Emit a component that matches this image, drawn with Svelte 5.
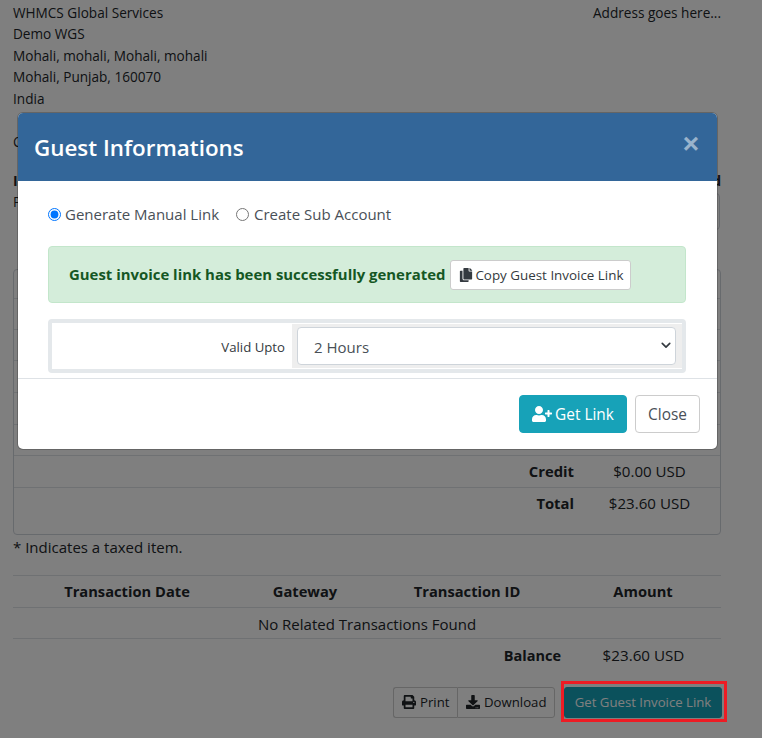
<script>
  const address = ['WHMCS Global Services', 'Demo WGS', 'Mohali, mohali, Mohali, mohali', 'Mohali, Punjab, 160070', 'India'];
  const hiddenRows = [31, 31, 32, 32, 31];
</script>

<div class="page">
  <div class="top">
    <div>
      {#each address as line}<div>{line}</div>{/each}
    </div>
    <div>Address goes here...</div>
  </div>
  <div class="client">Client</div>
  <div class="meta">
    <div>
      <div class="bold">Invoiced To</div>
      <div>Paid</div>
    </div>
    <div class="pay">
      <div class="bold">Payment Method</div>
      <div class="paybox"></div>
    </div>
  </div>

  <div class="panel">
    <div class="panel-head"></div>
    {#each hiddenRows as h}<div class="prow" style="height: {h}px"></div>{/each}
    <div class="prow sum"><b>Credit</b><span>$0.00 USD</span></div>
    <div class="prow sum"><b>Total</b><span>$23.60 USD</span></div>
  </div>
  <div class="note">* Indicates a taxed item.</div>

  <div class="tx">
    <div class="txrow head"><div>Transaction Date</div><div>Gateway</div><div>Transaction ID</div><div>Amount</div></div>
    <div class="txrow empty">No Related Transactions Found</div>
    <div class="balance"><b>Balance</b><span>$23.60 USD</span></div>
  </div>

  <div class="actions">
    <div class="group">
      <button class="gbtn">
        <svg viewBox="0 0 512 512" class="ic"><path d="M448 192V77.25c0-8.49-3.37-16.62-9.37-22.63L393.37 9.37c-6-6-14.14-9.37-22.63-9.37H96C78.33 0 64 14.33 64 32v160c-35.35 0-64 28.65-64 64v112c0 8.84 7.16 16 16 16h48v96c0 17.67 14.33 32 32 32h320c17.67 0 32-14.33 32-32v-96h48c8.84 0 16-7.16 16-16V256c0-35.35-28.65-64-64-64zm-64 256H128v-96h256v96zm0-224H128V64h192v48c0 8.84 7.16 16 16 16h48v96zm48 72c-13.25 0-24-10.75-24-24 0-13.26 10.75-24 24-24s24 10.74 24 24c0 13.25-10.75 24-24 24z"/></svg>
        Print
      </button>
      <button class="gbtn">
        <svg viewBox="0 0 512 512" class="ic"><path d="M216 0h80c13.3 0 24 10.7 24 24v168h87.7c17.8 0 26.7 21.5 14.1 34.1L269.7 378.3c-7.5 7.5-19.8 7.5-27.3 0L90.1 226.1c-12.6-12.6-3.7-34.1 14.1-34.1H192V24c0-13.3 10.7-24 24-24zm296 376v112c0 13.3-10.7 24-24 24H24c-13.3 0-24-10.7-24-24V376c0-13.3 10.7-24 24-24h146.7l49 49c20.1 20.1 52.5 20.1 72.6 0l49-49H488c13.3 0 24 10.7 24 24zm-124 88c0-11-9-20-20-20s-20 9-20 20 9 20 20 20 20-9 20-20zm64 0c0-11-9-20-20-20s-20 9-20 20 9 20 20 20 20-9 20-20z"/></svg>
        Download
      </button>
    </div>
    <button class="guest">Get Guest Invoice Link</button>
  </div>
</div>

<div class="backdrop"></div>
<div class="annot"></div>

<div class="modal">
  <div class="mhead">
    <div class="mtitle">Guest Informations</div>
    <span class="x">×</span>
  </div>
  <div class="mbody">
    <div class="radios">
      <label><input type="radio" name="m" checked /> Generate Manual Link</label>
      <label><input type="radio" name="m" /> Create Sub Account</label>
    </div>
    <div class="alert">
      <b>Guest invoice link has been successfully generated</b>
      <button class="copy">
        <svg viewBox="0 0 448 512" class="ic"><path d="M320 448v40c0 13.255-10.745 24-24 24H24c-13.255 0-24-10.745-24-24V120c0-13.255 10.745-24 24-24h72v296c0 30.879 25.121 56 56 56h168zm0-344V0H152c-13.255 0-24 10.745-24 24v368c0 13.255 10.745 24 24 24h272c13.255 0 24-10.745 24-24V128H344c-13.2 0-24-10.8-24-24zm120.971-31.029L375.029 7.029A24 24 0 0 0 358.059 0H352v96h96v-6.059a24 24 0 0 0-7.029-16.97z"/></svg>
        Copy Guest Invoice Link
      </button>
    </div>
    <div class="valid">
      <div class="vlabel">Valid Upto</div>
      <div class="vcell">
        <div class="selectwrap">
          <select><option>2 Hours</option></select>
          <svg class="chev" viewBox="0 0 12 8"><path d="M1.5 1.5 6 6l4.5-4.5" fill="none" stroke="#343a40" stroke-width="2" stroke-linecap="round" stroke-linejoin="round"/></svg>
        </div>
      </div>
    </div>
  </div>
  <div class="mfoot">
    <button class="getlink">
      <svg viewBox="0 0 640 512" class="ic big"><path d="M624 208h-64v-64c0-8.8-7.2-16-16-16h-32c-8.8 0-16 7.2-16 16v64h-64c-8.8 0-16 7.2-16 16v32c0 8.8 7.2 16 16 16h64v64c0 8.8 7.2 16 16 16h32c8.8 0 16-7.2 16-16v-64h64c8.8 0 16-7.2 16-16v-32c0-8.8-7.2-16-16-16zm-400 48c70.7 0 128-57.3 128-128S294.7 0 224 0 96 57.3 96 128s57.3 128 128 128zm89.6 32h-16.7c-22.2 10.2-46.9 16-72.9 16s-50.6-5.8-72.9-16h-16.7C60.2 288 0 348.2 0 422.4V464c0 26.5 21.5 48 48 48h352c26.5 0 48-21.5 48-48v-41.6c0-74.2-60.2-134.4-134.4-134.4z"/></svg>
      Get Link
    </button>
    <button class="close">Close</button>
  </div>
</div>

<style>
  :global(body) {
    margin: 0;
    background: #fff;
    overflow: hidden;
  }
  :global(#app) {
    position: relative;
    width: 762px;
    height: 738px;
    overflow: hidden;
    font-family: "Open Sans", "Noto Sans", sans-serif;
    font-size: 13.6px;
    line-height: 21.6px;
    color: #212529;
  }
  button {
    font-family: inherit;
    cursor: pointer;
  }
  .page {
    box-sizing: border-box;
    width: 721px;
    padding: 1.6px 0 0 13px;
  }
  .top {
    display: flex;
    justify-content: space-between;
  }
  .client {
    margin-top: 21px;
    line-height: 21px;
  }
  .meta {
    display: flex;
    justify-content: space-between;
    margin-top: 18px;
  }
  .bold {
    font-weight: 700;
    font-size: 14px;
  }
  .pay {
    text-align: right;
  }
  .paybox {
    width: 200px;
    height: 37px;
    margin-left: auto;
    margin-right: 1px;
    margin-top: 1.4px;
    border: 1px solid #ced4da;
    border-radius: 4px;
    box-sizing: border-box;
  }
  .panel {
    margin-top: 39.4px;
    height: 266px;
    box-sizing: border-box;
    border: 1px solid #ced4da;
    border-radius: 4px;
    font-size: 15.1px;
  }
  .panel-head {
    height: 28px;
  }
  .prow {
    box-sizing: border-box;
    border-top: 1px solid #dee2e6;
  }
  .sum {
    display: grid;
    grid-template-columns: 560px 1fr;
    height: 32px;
    padding-top: 1px;
    align-items: center;
  }
  .sum b {
    text-align: right;
    font-size: 14.8px;
  }
  .sum span {
    text-align: center;
    padding-left: 5px;
  }
  .note {
    margin-top: 2px;
    font-size: 15px;
  }
  .tx {
    margin-top: 16.4px;
  }
  .txrow {
    box-sizing: border-box;
    height: 32px;
    border-top: 1px solid #dee2e6;
    align-items: center;
  }
  .head {
    display: grid;
    grid-template-columns: 228px 128px 196px 156px;
    font-weight: 700;
    font-size: 14.7px;
    text-align: center;
    padding-top: 1px;
  }
  .empty {
    display: flex;
    justify-content: center;
    height: 31px;
    padding-top: 3px;
    font-size: 15px;
  }
  .balance {
    display: grid;
    grid-template-columns: 548px 1fr;
    border-top: 1px solid #dee2e6;
    height: 34px;
    align-items: center;
    font-size: 15.2px;
  }
  .balance b {
    text-align: right;
    font-size: 14.5px;
  }
  .balance span {
    text-align: center;
    padding-left: 5px;
  }
  .actions {
    display: flex;
    justify-content: flex-end;
    gap: 9px;
    margin-top: 14px;
    margin-right: -1px;
  }
  .group {
    display: flex;
  }
  .gbtn {
    height: 31px;
    padding: 0 8px;
    background: #fff;
    border: 1px solid #ccc;
    color: #212529;
    font-size: 13.2px;
    display: flex;
    align-items: center;
    gap: 4px;
  }
  .gbtn:first-child {
    border-radius: 3px 0 0 3px;
    border-right: 0;
    width: 64px;
  }
  .gbtn:last-child {
    border-radius: 0 3px 3px 0;
    width: 98px;
  }
  .guest {
    width: 158px;
    height: 31px;
    padding: 0;
    border: 1px solid #17a2b8;
    border-radius: 3px;
    background: #17a2b8;
    color: #fff;
    font-size: 13.2px;
  }
  .ic {
    width: 14px;
    height: 14px;
    fill: currentColor;
    flex: none;
  }
  .big {
    width: 20px;
    height: 16px;
  }
  .backdrop {
    position: absolute;
    inset: 0;
    background: rgba(0, 0, 0, 0.5);
  }
  .annot {
    position: absolute;
    left: 561px;
    top: 681px;
    width: 166px;
    height: 41px;
    box-sizing: border-box;
    border: 3px solid #ed1c24;
  }
  .modal {
    position: absolute;
    left: 18px;
    top: 113px;
    width: 699px;
    height: 336px;
    background: #fff;
    border-radius: 5px;
    overflow: hidden;
    box-shadow: 0 0 0 1px rgba(0, 0, 0, 0.2);
  }
  .mhead {
    height: 68px;
    background: #336699;
    color: #fff;
    display: flex;
    align-items: center;
    justify-content: space-between;
    padding: 0 18px 0 16px;
  }
  .mtitle {
    font-size: 22.4px;
    font-weight: 600;
    line-height: 30px;
    padding-top: 2px;
  }
  .x {
    font-family: "Liberation Sans", sans-serif;
    font-size: 28px;
    font-weight: 700;
    line-height: 28px;
    opacity: 0.5;
    margin-top: -6px;
  }
  .mbody {
    padding: 0 31px 0 30px;
    height: 198px;
    box-sizing: border-box;
    border-bottom: 1px solid #dee2e6;
  }
  .radios {
    display: flex;
    gap: 17px;
    padding-top: 23px;
    height: 42px;
    color: #495057;
    font-size: 15px;
  }
  .radios label {
    display: flex;
    align-items: center;
    height: 22px;
    gap: 4px;
  }
  .radios label + label {
    gap: 5px;
  }
  .radios input {
    margin: 0 0 2px;
    width: 13px;
    height: 13px;
  }
  .alert {
    box-sizing: border-box;
    height: 57px;
    display: flex;
    align-items: center;
    gap: 5px;
    padding-left: 20px;
    background: #d4edda;
    border: 1px solid #c3e6cb;
    border-radius: 4px;
    color: #155724;
    font-size: 14.92px;
  }
  .copy {
    display: flex;
    align-items: center;
    gap: 2px;
    height: 30px;
    width: 181px;
    padding: 0 8px;
    background: #fff;
    border: 1px solid #ccc;
    border-radius: 3px;
    color: #343a40;
    font-size: 13.4px;
    white-space: nowrap;
  }
  .valid {
    box-sizing: border-box;
    margin-top: 16px;
    height: 54px;
    display: flex;
    border: 4px solid #e4e8eb;
    border-radius: 4px;
    padding: 1px 0;
  }
  .vlabel {
    width: 233px;
    padding-right: 7px;
    text-align: right;
    font-size: 13.2px;
    line-height: 46px;
    color: #343a40;
  }
  .vcell {
    flex: 1;
    background: #eee;
    padding: 3px 6px 3px 5px;
  }
  .selectwrap {
    position: relative;
    height: 38px;
  }
  select {
    width: 100%;
    height: 38px;
    box-sizing: border-box;
    appearance: none;
    background: #fff;
    border: 1px solid #ced4da;
    border-radius: 4px;
    padding: 1px 16px 0;
    font-family: inherit;
    font-size: 15px;
    color: #495057;
  }
  .chev {
    position: absolute;
    right: 5px;
    top: 15px;
    width: 10px;
    height: 7px;
  }
  .mfoot {
    display: flex;
    justify-content: flex-end;
    gap: 8px;
    padding: 16px 17px 0 0;
  }
  .mfoot button {
    height: 38px;
    border-radius: 4px;
    font-size: 15.4px;
  }
  .getlink {
    width: 108px;
    padding: 0;
    background: #17a2b8;
    border: 1px solid #17a2b8;
    color: #fff;
    display: flex;
    align-items: center;
    justify-content: center;
    gap: 3px;
  }
  .close {
    width: 65px;
    padding: 0;
    background: #fff;
    border: 1px solid #ccc;
    color: #495057;
  }
</style>
